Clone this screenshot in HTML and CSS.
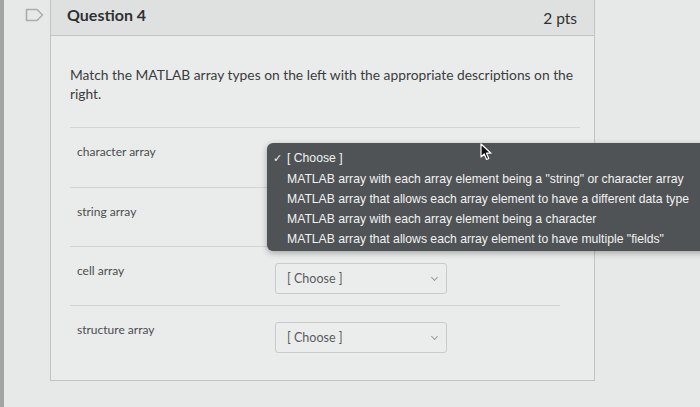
FILE: index.html
```html
<!DOCTYPE html>
<html lang="en">
<head>
  <meta charset="UTF-8" />
  <title>Question 4</title>
  <link rel="stylesheet" href="styles.css">
</head>
<body>
  <div class="page">
    <!-- question flag gutter -->
    <div class="gutter">
      <svg class="flag" width="20" height="14" viewBox="0 0 20 14">
        <path d="M1.5 1.5 H12 L17.5 7 L12 12.5 H1.5 Z" fill="none" stroke="#a9adb0" stroke-width="1.6" stroke-linejoin="round"/>
      </svg>
    </div>

    <div class="card">
      <div class="card-header">
        <span class="q-title">Question 4</span>
        <span class="q-pts">2 pts</span>
      </div>
      <div class="card-body">
        <p class="q-text">Match the MATLAB array types on the left with the appropriate descriptions on the right.</p>

        <!-- first two selects sit under the open list -->
        <div class="match-row">
          <div class="match-label">character array</div>
          <div class="select covered"><span>[ Choose ]</span><span class="chev"></span></div>
        </div>
        <div class="match-row">
          <div class="match-label">string array</div>
          <div class="select covered"><span>[ Choose ]</span><span class="chev"></span></div>
        </div>
        <div class="match-row">
          <div class="match-label">cell array</div>
          <div class="select"><span>[ Choose ]</span><span class="chev"></span></div>
        </div>
        <div class="match-row last">
          <div class="match-label">structure array</div>
          <div class="select"><span>[ Choose ]</span><span class="chev"></span></div>
        </div>
      </div>
    </div>
  </div>

  <!-- open native dropdown -->
  <ul class="dropdown">
    <li class="checked"><span class="tick">✓</span>[ Choose ]</li>
    <li>MATLAB array with each array element being a "string" or character array</li>
    <li>MATLAB array that allows each array element to have a different data type</li>
    <li>MATLAB array with each array element being a character</li>
    <li>MATLAB array that allows each array element to have multiple "fields"</li>
  </ul>

  <svg class="cursor" width="14" height="18" viewBox="0 0 14 18">
    <path d="M1 1 L1 14 L4.2 11 L6.6 16.5 L8.8 15.5 L6.5 10.2 L11 10.2 Z" fill="#111" stroke="#fff" stroke-width="1.2" stroke-linejoin="round"/>
  </svg>
</body>
</html>
```

FILE: styles.css
```css
* { margin: 0; padding: 0; box-sizing: border-box; }
body {
  font-family: 'Lato', 'Open Sans', sans-serif;
  background: #e7e9e9;
  color: #3a3c3d;
  width: 700px;
  height: 407px;
  overflow: hidden;
  border-left: 4px solid #a3a5a5;
}
.page {
  display: flex;
  align-items: flex-start;
}
.gutter {
  width: 46px;
  padding: 6px 0 0 21px;
}
.card {
  width: 545px;
  border: 1px solid #c2c4c4;
  border-top: none;
  background: #eaecec;
}
.card-header {
  height: 36px;
  display: flex;
  align-items: flex-start;
  justify-content: space-between;
  padding: 4px 17px 0 16px;
  background: #dfe1e1;
  border-bottom: 1px solid #c3c5c5;
}
.q-title {
  font-size: 16px;
  line-height: 22px;
  font-weight: 700;
  color: #2f3132;
}
.q-pts {
  font-size: 15.5px;
  line-height: 22px;
  padding-top: 3px;
  color: #2f3132;
}
.card-body {
  padding: 29px 20px 15px 19px;
}
.q-text {
  font-size: 13.8px;
  line-height: 19px;
  width: 510px;
  padding-bottom: 24px;
  border-bottom: 1px solid #d3d5d5;
}
.match-row {
  display: flex;
  align-items: flex-start;
  padding: 16px 0 11px 7px;
  margin-right: 14px;
  border-bottom: 1px solid #d3d5d5;
}
.match-row:first-of-type { padding-bottom: 12px; }
.match-row.last { border-bottom: none; padding-bottom: 12px; }
.match-label {
  width: 198px;
  font-size: 12px;
  line-height: 16px;
  color: #4a4c4d;
}
.select {
  width: 172px;
  height: 31px;
  display: flex;
  align-items: center;
  justify-content: space-between;
  padding: 0 9px 0 11px;
  border: 1px solid #c9cbcb;
  border-radius: 3px;
  background: #ebeded;
  font-size: 12.5px;
  color: #5a5c5d;
}
.select.covered { visibility: hidden; }
.chev {
  width: 5px;
  height: 5px;
  border-right: 1px solid #9a9c9d;
  border-bottom: 1px solid #9a9c9d;
  transform: rotate(45deg);
  margin-top: -3px;
}
.dropdown {
  position: absolute;
  left: 267px;
  top: 143px;
  width: 445px;
  height: 108px;
  list-style: none;
  background: #4f5355;
  border-radius: 6px;
  box-shadow: 0 2px 6px rgba(0, 0, 0, 0.3);
  padding: 5px 0 0 6px;
  font-family: 'Liberation Sans', Arial, sans-serif;
  font-size: 12.2px;
  line-height: 20px;
  color: #f2f2f2;
}
.dropdown li { padding-left: 14px; }
.dropdown li.checked {
  padding-left: 0;
  margin-bottom: 1px;
}
.tick {
  display: inline-block;
  width: 14px;
  font-size: 11px;
}
.cursor {
  position: absolute;
  left: 480px;
  top: 143px;
}
```
